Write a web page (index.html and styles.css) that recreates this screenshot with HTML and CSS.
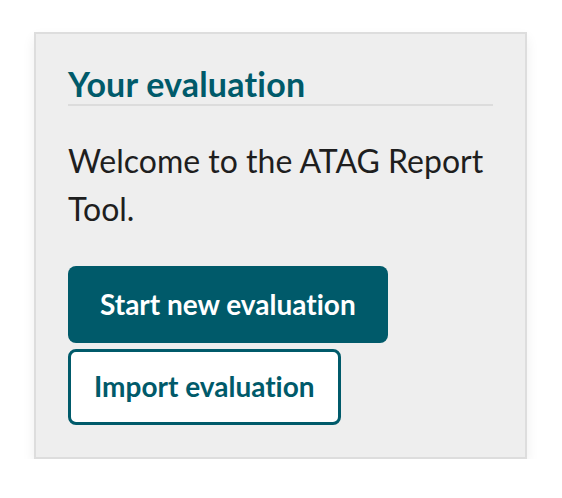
FILE: index.html
```html
<!DOCTYPE html>
<html lang="en">
<head>
<meta charset="utf-8">
<title>ATAG Report Tool</title>
<link rel="stylesheet" href="styles.css">
</head>
<body>
<main class="page">
  <section class="card">
    <h2 class="card-title">Your evaluation</h2>
    <p class="welcome">Welcome to the ATAG Report Tool.</p>
    <div class="actions">
      <button class="btn btn-primary" type="button">Start new evaluation</button>
      <button class="btn btn-secondary" type="button">Import evaluation</button>
    </div>
  </section>
</main>
</body>
</html>
```
FILE: styles.css
```css
html, body {
  margin: 0;
  background: #ffffff;
}
body {
  font-family: Lato, "Open Sans", sans-serif;
  font-variant-ligatures: none;
  color: #1e1e1e;
}
.page {
  padding: 32px 0 0 34px;
}
.card {
  box-sizing: border-box;
  width: 493px;
  background: #eeeeee;
  border: 2px solid #dddddd;
  padding: 30px 32px 32px;
  box-shadow: 0 6px 12px rgba(0, 0, 0, 0.07);
}
.card-title {
  margin: 0;
  font-size: 34px;
  line-height: 40px;
  font-weight: 700;
  letter-spacing: 0.2px;
  color: #005a6a;
  border-bottom: 2px solid #dcdcdc;
}
.welcome {
  margin: 31px 0 0;
  font-size: 32px;
  line-height: 48px;
  font-weight: 400;
}
.actions {
  margin-top: 33px;
  display: flex;
  flex-direction: column;
  align-items: flex-start;
  gap: 6px;
}
.btn {
  font-family: Lato, "Open Sans", sans-serif;
  font-variant-ligatures: none;
  font-size: 28px;
  line-height: 37px;
  font-weight: 700;
  border-radius: 8px;
  cursor: pointer;
}
.btn-primary {
  background: #005a6a;
  color: #ffffff;
  border: 0;
  padding: 20px 32px;
}
.btn-secondary {
  background: #ffffff;
  color: #005a6a;
  border: 3px solid #005a6a;
  padding: 16px 23px 17px;
}
```
